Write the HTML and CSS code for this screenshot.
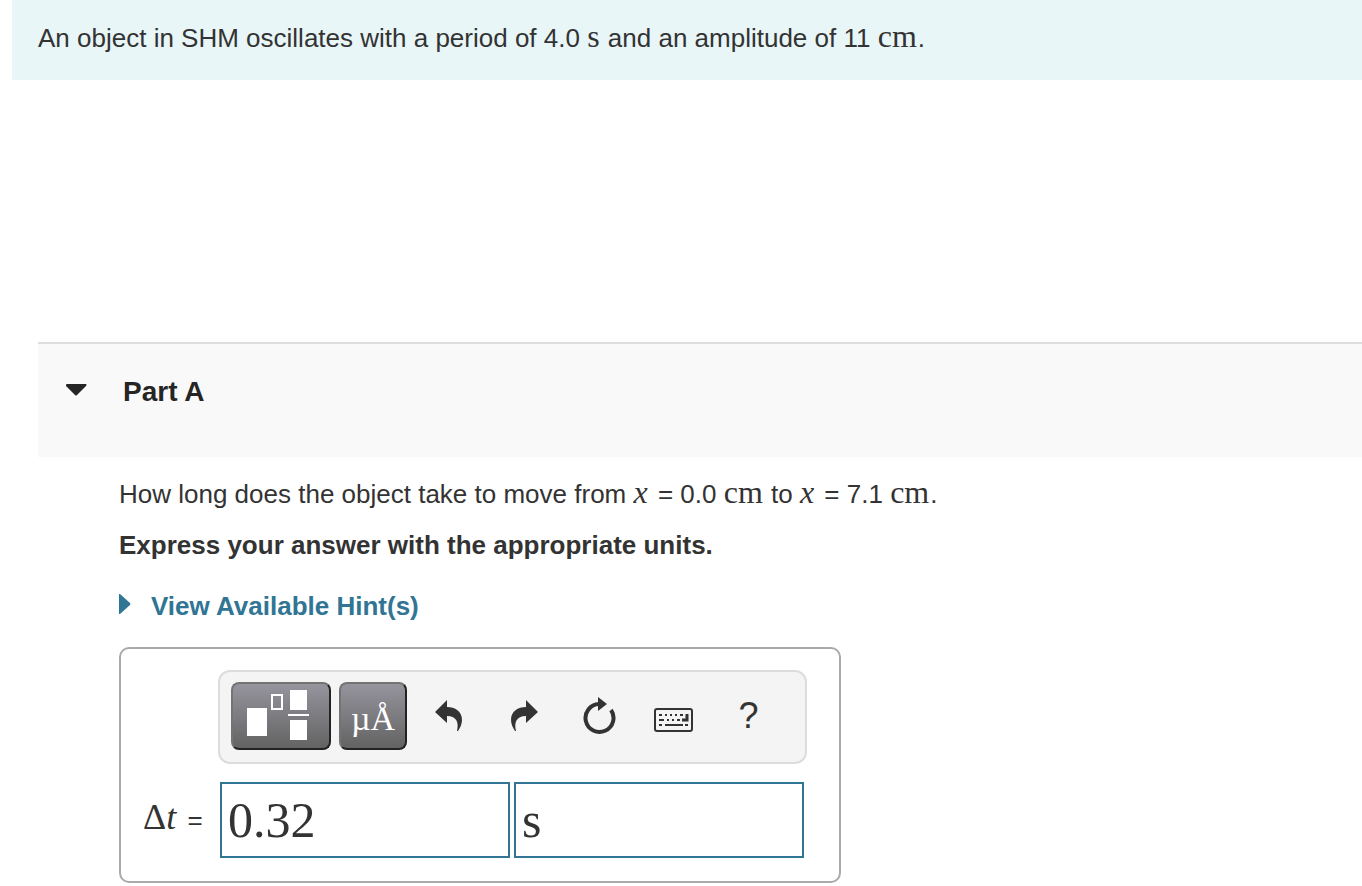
FILE: index.html
```html
<!DOCTYPE html>
<html lang="en">

<head>
    <meta charset="UTF-8">
    <meta name="viewport" content="width=device-width, initial-scale=1.0">
    <title>Part A</title>
    <link rel="stylesheet" href="styles.css">
</head>

<body>
    <div class="intro">
        <p>An object in SHM oscillates with a period of 4.0 <span class="math">s</span> and an amplitude of 11 <span class="math">cm</span>.</p>
    </div>

    <main>
        <h2 class="partHeader">
            <button type="button" class="partToggle" aria-expanded="true">
                <svg width="22" height="12" viewBox="0 0 22 12" aria-hidden="true">
                    <path d="M1 0h19q1 1 0 2l-9 9q-1 1-2 0l-9-9q-1-1 1-2z" fill="currentColor" />
                </svg>
                Part A
            </button>
        </h2>

        <div class="part">
            <p>How long does the object take to move from <i class="math">x</i> = 0.0 <span class="math">cm</span> to <i class="math">x</i> = 7.1 <span class="math">cm</span>.</p>
            <p class="instructions">Express your answer with the appropriate units.</p>
            <a class="hints" href="#hints">
                <svg width="12" height="20" viewBox="0 0 12 20" aria-hidden="true">
                    <path d="M0 0h1l10 9q1 1 0 2l-10 9h-1z" fill="currentColor" />
                </svg>
                View Available Hint(s)
            </a>

            <form class="answer">
                <div class="toolbar">
                    <button type="button" class="dark templates" aria-label="Templates">
                        <svg width="68" height="52" viewBox="0 0 68 52" fill="#fff" aria-hidden="true">
                            <rect x="0" y="19" width="20" height="28" />
                            <rect x="25" y="6" width="10" height="14" fill="none" stroke="#fff" stroke-width="2" />
                            <rect x="43" y="1" width="17" height="20" />
                            <rect x="41" y="25" width="21" height="2" />
                            <rect x="43" y="31" width="17" height="20" />
                        </svg>
                    </button>
                    <button type="button" class="dark units" aria-label="Units">µÅ</button>
                    <div class="tools">
                        <button type="button" class="tool" aria-label="Undo">
                            <svg width="28" height="32" viewBox="0 0 28 32" aria-hidden="true">
                                <path d="M0 12L12 0v7c8 0 15 4 15 13 0 4-2 8-4 11h-1c2-8 0-15-10-15v7z" fill="currentColor" />
                            </svg>
                        </button>
                        <button type="button" class="tool" aria-label="Redo">
                            <svg width="28" height="32" viewBox="0 0 28 32" aria-hidden="true">
                                <path d="M28 12L16 0v7c-8 0-15 4-15 13 0 4 2 8 4 11h1c-2-8 0-15 10-15v7z" fill="currentColor" />
                            </svg>
                        </button>
                        <button type="button" class="tool" aria-label="Reset">
                            <svg width="34" height="38" viewBox="0 0 34 38" aria-hidden="true">
                                <path d="M17 7A14 14 0 1 0 29 13" fill="none" stroke="currentColor" stroke-width="4" />
                                <path d="M16 0l9 7-9 7z" fill="currentColor" />
                            </svg>
                        </button>
                        <button type="button" class="tool keyboard" aria-label="Keyboard shortcuts">
                            <svg width="40" height="24" viewBox="0 0 40 24" aria-hidden="true">
                                <rect x="1" y="1" width="37" height="22" rx="2" fill="none" stroke="currentColor" stroke-width="2" />
                                <g fill="none" stroke="currentColor" stroke-width="2">
                                    <path d="M5 7h3M11 7h2M16 7h2M21 7h2M26 7h3" />
                                    <path d="M5 12h5M13 12h2M18 12h2M23 12h3" />
                                    <path d="M5 17h3M11 17h18M31 17h3" />
                                    <path d="M33 6v6h-5" stroke-width="3" />
                                </g>
                            </svg>
                        </button>
                        <button type="button" class="tool help" aria-label="Help">?</button>
                    </div>
                </div>

                <div class="fields">
                    <label for="value"><span class="math">Δ<i>t</i></span> =</label>
                    <input type="text" name="value" id="value" value="0.32">
                    <input type="text" name="unit" id="unit" value="s" aria-label="Units">
                </div>
            </form>
        </div>
    </main>
</body>

</html>
```
FILE: styles.css
```css
* {
    box-sizing: border-box;
}

body {
    margin: 0 0 0 12px;
    background-color: #fff;
    color: #333;
    font-family: "Liberation Sans", Arial, sans-serif;
    font-size: 26px;
    line-height: 32px;
}

p {
    margin: 0;
}

button {
    padding: 0;
    border: none;
    background: none;
    color: inherit;
    font: inherit;
}

svg {
    display: block;
}

.math {
    margin-right: 1px;
    font-family: "Liberation Serif", "Times New Roman", serif;
    font-size: 32px;
    line-height: 0;
}

i.math {
    margin-right: 3px;
}

.intro {
    padding: 22px 26px 26px;
    background-color: #e8f6f7;
}

main {
    margin: 262px 0 0 26px;
}

.partHeader {
    margin: 0;
    padding: 32px 28px;
    height: 115px;
    border-top: 2px solid #ddd;
    background-color: #f9f9f9;
    color: #252525;
    font-size: 28px;
}

.partToggle {
    display: flex;
    align-items: center;
    gap: 35px;
}

.partToggle svg,
.hints svg {
    margin-bottom: 4px;
}

.part {
    padding: 21px 20px 0 81px;
}

.instructions {
    margin-top: 19px;
    font-weight: bold;
}

.hints {
    display: flex;
    align-items: center;
    gap: 20px;
    width: fit-content;
    margin-top: 29px;
    color: #317595;
    font-weight: bold;
    text-decoration: none;
}

.answer {
    max-width: 722px;
    margin-top: 25px;
    padding: 21px 32px 23px 22px;
    border: 2px solid #aaa;
    border-radius: 10px;
}

.toolbar {
    display: flex;
    align-items: center;
    height: 94px;
    margin-left: 75px;
    padding: 0 11px 2px;
    border: 2px solid #dcdcdc;
    border-radius: 12px;
    background-color: #f4f4f4;
}

.dark {
    display: flex;
    align-items: center;
    justify-content: center;
    height: 68px;
    border: 2px solid #222;
    border-top-color: #747474;
    border-left-color: #747474;
    border-radius: 8px;
    background: linear-gradient(#96949d, #636363);
    color: #fff;
}

.templates {
    width: 100px;
    margin-right: 8px;
    padding-bottom: 2px;
}

.units {
    width: 68px;
    padding-top: 6px;
    font-family: "Liberation Serif", "Times New Roman", serif;
    font-size: 34px;
}

.tools {
    display: grid;
    grid-template-columns: repeat(5, 1fr);
    flex: 1;
    align-items: center;
    padding: 0 8px 0 4px;
}

.tool {
    display: flex;
    justify-content: center;
}

.keyboard {
    padding-top: 8px;
}

.help {
    font-size: 36px;
}

.fields {
    display: flex;
    align-items: center;
    gap: 4px;
    margin-top: 18px;
    padding-right: 3px;
}

.fields label {
    width: 73px;
    white-space: nowrap;
}

.fields .math {
    margin-right: 4px;
    font-size: 36px;
}

.fields input {
    flex: 1;
    min-width: 0;
    height: 76px;
    padding: 0 6px;
    border: 2px solid #317595;
    border-radius: 0;
    background-color: #fff;
    color: #333;
    font-family: "Liberation Serif", "Times New Roman", serif;
    font-size: 50px;
}
```
